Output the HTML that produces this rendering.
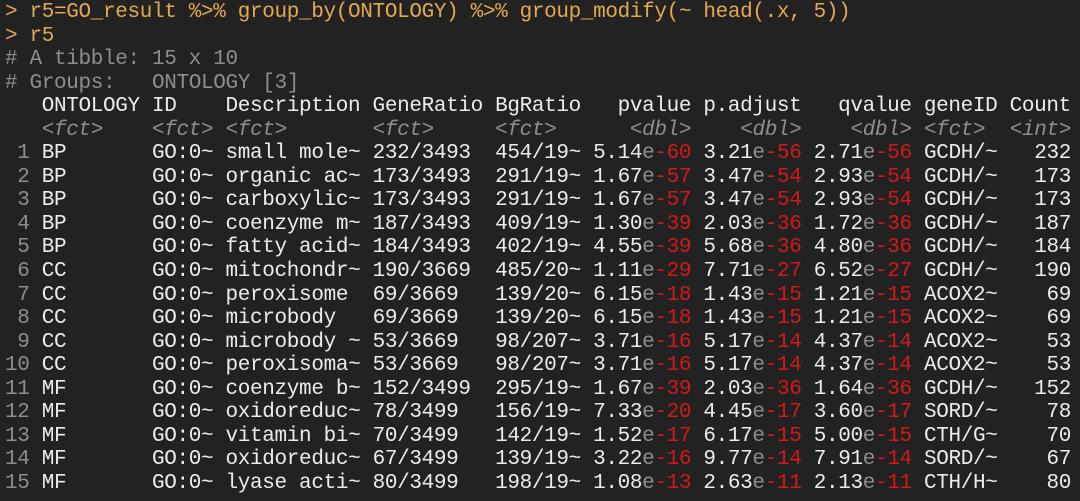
<!DOCTYPE html>
<html><head><meta charset="utf-8"><style>
html,body{margin:0;padding:0;background:#222;width:1080px;height:501px;overflow:hidden}
pre{margin:0;padding:1px 0 0 5px;font-family:"Liberation Mono","DejaVu Sans Mono",monospace;font-size:21px;letter-spacing:-0.35px;line-height:23.55px;color:#ececec}
.o{color:#e3a851}
.c{color:#8e8e8e}
s{color:#8e8e8e;text-decoration:none}
u{color:#d41818;text-decoration:none}
em{color:#8e8e8e;font-style:italic}
</style></head><body><pre><span class="o">&gt; r5=GO_result %&gt;% group_by(ONTOLOGY) %&gt;% group_modify(~ head(.x, 5))
&gt; r5</span>
<span class="c"># A tibble: 15 x 10
# Groups:   ONTOLOGY [3]</span>
   ONTOLOGY ID    Description GeneRatio BgRatio   pvalue p.adjust   qvalue geneID Count
   <em>&lt;fct&gt;</em>    <em>&lt;fct&gt;</em> <em>&lt;fct&gt;</em>       <em>&lt;fct&gt;</em>     <em>&lt;fct&gt;</em>      <em>&lt;dbl&gt;</em>    <em>&lt;dbl&gt;</em>    <em>&lt;dbl&gt;</em> <em>&lt;fct&gt;</em>  <em>&lt;int&gt;</em>
<s> 1</s> BP       GO:0~ small mole~ 232/3493  454/19~ 5.14<s>e</s><u>-60</u> 3.21<s>e</s><u>-56</u> 2.71<s>e</s><u>-56</u> GCDH/~   232
<s> 2</s> BP       GO:0~ organic ac~ 173/3493  291/19~ 1.67<s>e</s><u>-57</u> 3.47<s>e</s><u>-54</u> 2.93<s>e</s><u>-54</u> GCDH/~   173
<s> 3</s> BP       GO:0~ carboxylic~ 173/3493  291/19~ 1.67<s>e</s><u>-57</u> 3.47<s>e</s><u>-54</u> 2.93<s>e</s><u>-54</u> GCDH/~   173
<s> 4</s> BP       GO:0~ coenzyme m~ 187/3493  409/19~ 1.30<s>e</s><u>-39</u> 2.03<s>e</s><u>-36</u> 1.72<s>e</s><u>-36</u> GCDH/~   187
<s> 5</s> BP       GO:0~ fatty acid~ 184/3493  402/19~ 4.55<s>e</s><u>-39</u> 5.68<s>e</s><u>-36</u> 4.80<s>e</s><u>-36</u> GCDH/~   184
<s> 6</s> CC       GO:0~ mitochondr~ 190/3669  485/20~ 1.11<s>e</s><u>-29</u> 7.71<s>e</s><u>-27</u> 6.52<s>e</s><u>-27</u> GCDH/~   190
<s> 7</s> CC       GO:0~ peroxisome  69/3669   139/20~ 6.15<s>e</s><u>-18</u> 1.43<s>e</s><u>-15</u> 1.21<s>e</s><u>-15</u> ACOX2~    69
<s> 8</s> CC       GO:0~ microbody   69/3669   139/20~ 6.15<s>e</s><u>-18</u> 1.43<s>e</s><u>-15</u> 1.21<s>e</s><u>-15</u> ACOX2~    69
<s> 9</s> CC       GO:0~ microbody ~ 53/3669   98/207~ 3.71<s>e</s><u>-16</u> 5.17<s>e</s><u>-14</u> 4.37<s>e</s><u>-14</u> ACOX2~    53
<s>10</s> CC       GO:0~ peroxisoma~ 53/3669   98/207~ 3.71<s>e</s><u>-16</u> 5.17<s>e</s><u>-14</u> 4.37<s>e</s><u>-14</u> ACOX2~    53
<s>11</s> MF       GO:0~ coenzyme b~ 152/3499  295/19~ 1.67<s>e</s><u>-39</u> 2.03<s>e</s><u>-36</u> 1.64<s>e</s><u>-36</u> GCDH/~   152
<s>12</s> MF       GO:0~ oxidoreduc~ 78/3499   156/19~ 7.33<s>e</s><u>-20</u> 4.45<s>e</s><u>-17</u> 3.60<s>e</s><u>-17</u> SORD/~    78
<s>13</s> MF       GO:0~ vitamin bi~ 70/3499   142/19~ 1.52<s>e</s><u>-17</u> 6.17<s>e</s><u>-15</u> 5.00<s>e</s><u>-15</u> CTH/G~    70
<s>14</s> MF       GO:0~ oxidoreduc~ 67/3499   139/19~ 3.22<s>e</s><u>-16</u> 9.77<s>e</s><u>-14</u> 7.91<s>e</s><u>-14</u> SORD/~    67
<s>15</s> MF       GO:0~ lyase acti~ 80/3499   198/19~ 1.08<s>e</s><u>-13</u> 2.63<s>e</s><u>-11</u> 2.13<s>e</s><u>-11</u> CTH/H~    80</pre></body></html>
